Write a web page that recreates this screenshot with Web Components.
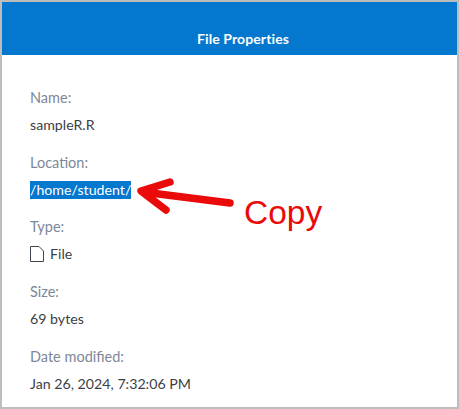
<!DOCTYPE html>
<html>
<head>
<meta charset="utf-8">
<style>
    html, body { margin: 0; padding: 0; background: #fff; }
</style>
</head>
<body>
<file-properties>
    <prop-row label="Name:">sampleR.R</prop-row>
    <prop-row label="Location:" selected>/home/student/</prop-row>
    <prop-row label="Type:" icon>File</prop-row>
    <prop-row label="Size:">69 bytes</prop-row>
    <prop-row label="Date modified:">Jan 26, 2024, 7:32:06 PM</prop-row>
</file-properties>
<script>
class FileProperties extends HTMLElement {
    constructor() {
        super();
        this.attachShadow({ mode: 'open' });
        this.shadowRoot.innerHTML = `
            <style>
                :host {
                    display: block;
                    position: relative;
                    box-sizing: border-box;
                    width: 459px;
                    height: 409px;
                    overflow: hidden;
                    border: 2px solid #bdbdbd;
                    background: #fff;
                    font-family: 'Lato', sans-serif;
                }
                .header {
                    height: 53px;
                    box-sizing: border-box;
                    background: #0477ce;
                    color: #fff;
                    font-size: 14px;
                    font-weight: 700;
                    letter-spacing: .1px;
                    display: flex;
                    justify-content: center;
                    align-items: flex-end;
                    padding: 0 0 8px 27px;
                }
                .body {
                    display: flex;
                    flex-direction: column;
                    gap: 19.7px;
                    padding: 34px 28px 0;
                }
                .arrow { position: absolute; left: 0; top: 0; pointer-events: none; }
                .copy {
                    position: absolute;
                    left: 242px;
                    top: 192px;
                    font: 33.5px 'Liberation Sans', sans-serif;
                    color: #ea0a0a;
                }
            </style>
            <div class="header">File Properties</div>
            <div class="body"><slot></slot></div>
            <svg class="arrow" width="455" height="405" viewBox="2 2 455 405">
                <path d="M230 203 L143 192 M170 182 L141 191 L166 210" fill="none" stroke="#ea0a0a" stroke-width="7.5" stroke-linecap="round" stroke-linejoin="round"/>
            </svg>
            <div class="copy">Copy</div>
        `;
    }
}

class PropRow extends HTMLElement {
    constructor() {
        super();
        this.attachShadow({ mode: 'open' });
    }

    connectedCallback() {
        const icon = this.hasAttribute('icon') ? `
            <svg width="14" height="16" viewBox="0 0 14 16">
                <path d="M.5 .5H9L13.5 5V15.5H.5Z" fill="none" stroke="#3f4650" stroke-width="1"/>
            </svg>` : '';
        this.shadowRoot.innerHTML = `
            <style>
                :host { display: block; }
                .label { color: #7d8797; font-size: 14.5px; line-height: 17px; font-weight: 400; }
                .value {
                    display: flex;
                    align-items: center;
                    gap: 6px;
                    margin-top: 10px;
                    color: #3b3f45;
                    font-size: 14.2px;
                    line-height: 18px;
                }
                :host([selected]) .text { background: #0477ce; color: #fff; }
            </style>
            <div class="label">${this.getAttribute('label')}</div>
            <div class="value">${icon}<span class="text"><slot></slot></span></div>
        `;
    }
}

customElements.define('file-properties', FileProperties);
customElements.define('prop-row', PropRow);
</script>
</body>
</html>
